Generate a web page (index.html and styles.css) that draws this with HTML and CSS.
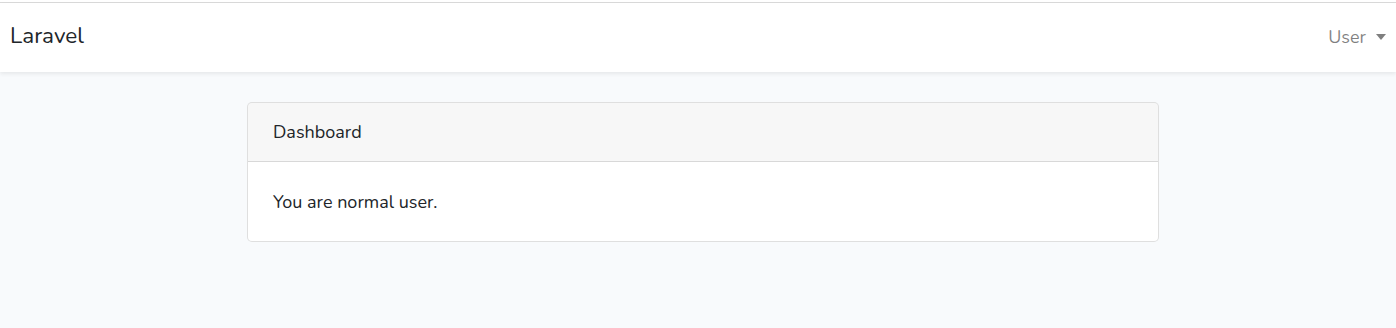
FILE: index.html
```html
<!DOCTYPE html>
<html lang="en">
<head>
    <meta charset="UTF-8">
    <meta name="viewport" content="width=device-width, initial-scale=1.0">
    <title>Laravel</title>
    <link rel="stylesheet" href="styles.css">
</head>
<body>
    <div class="app">
        <nav class="navbar">
            <a class="navbar-brand" href="#">Laravel</a>
            <a class="nav-link dropdown-toggle" href="#">User</a>
        </nav>

        <main class="main">
            <div class="card">
                <div class="card-header">Dashboard</div>
                <div class="card-body">You are normal user.</div>
            </div>
        </main>
    </div>
</body>
</html>
```

FILE: styles.css
```css
* {
    margin: 0;
    padding: 0;
    box-sizing: border-box;
}

html {
    background-color: #fff;
}

body {
    padding-top: 2px;
    font-family: "Nunito", Lato, "Open Sans", sans-serif;
    font-size: 18px;
    line-height: 1.6;
    color: #212529;
}

.app {
    min-height: 326px;
    border-top: 1px solid #dadada;
    background-color: #f8fafc;
}

.navbar {
    height: 69px;
    padding: 0 10px;
    display: flex;
    align-items: center;
    justify-content: space-between;
    background-color: #fff;
    box-shadow: 0 2px 4px rgba(0,0,0,.075);
}

.navbar a {
    text-decoration: none;
}

.navbar-brand {
    padding-bottom: 4px;
    font-size: 22.5px;
    color: #212529;
}

.nav-link {
    font-size: 18px;
    color: rgba(0,0,0,.5);
    display: flex;
    align-items: center;
}

.dropdown-toggle:after {
    content: '';
    margin-left: 10px;
    border-top: 6px solid;
    border-right: 5px solid transparent;
    border-left: 5px solid transparent;
}

.main {
    padding: 30px 0 0 10px;
    display: flex;
    justify-content: center;
}

.card {
    width: 912px;
    background-color: #fff;
    border: 1px solid rgba(0,0,0,.125);
    border-radius: 5px;
    overflow: hidden;
}

.card-header {
    padding: 15px 25px 14px;
    background-color: rgba(0,0,0,.03);
    border-bottom: 1px solid rgba(0,0,0,.125);
}

.card-body {
    padding: 26px 25px 0;
    height: 79px;
}
```
